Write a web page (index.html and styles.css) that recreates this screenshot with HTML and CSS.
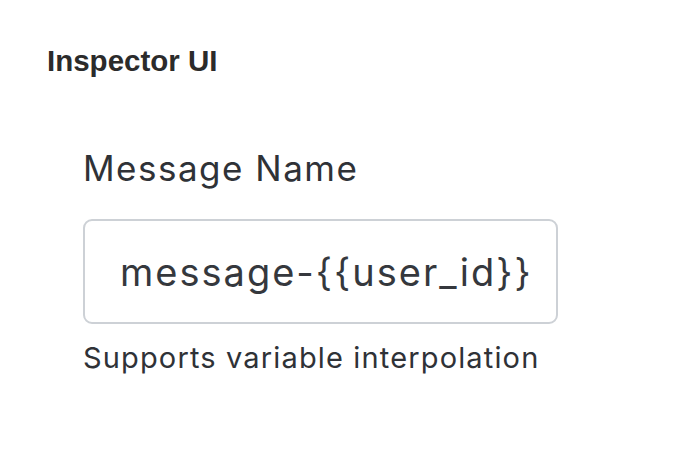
FILE: index.html
```html
<!doctype html>
<html lang="en">
<head>
<meta charset="UTF-8">
<title>Inspector UI</title>
<link rel="stylesheet" href="styles.css">
</head>
<body>
	<h2 class="title">Inspector UI</h2>

	<!-- 메시지 이름 필드 -->
	<div class="field">
		<label class="field_label" for="msgName">Message Name</label>
		<input type="text" id="msgName" class="field_input" value="message-{{user_id}}">
		<div class="field_help">Supports variable interpolation</div>
	</div>
</body>
</html>
```

FILE: styles.css
```css
body{
	margin:0; background-color:#ffffff;
	font-family:Inter, "Liberation Sans", sans-serif;
}
.title{
	margin:0; padding:44px 0 0 47px;
	font-family:"Liberation Sans", Arial, sans-serif;
	font-size:29.5px; font-weight:bold; line-height:34px;
	color:#2b2b2b;
}
.field{
	display:flex; flex-direction:column; align-items:flex-start;
	padding:69px 0 0 83px;
}
.field_label{
	font-size:35px; line-height:42px; color:#2f3237;
	letter-spacing:1.5px;
	margin-bottom:30px;
}
.field_input{
	box-sizing:border-box;
	width:475px; height:105px;
	padding:0 0 0 35px;
	border:2px solid #cdd1d6; border-radius:9px;
	font-family:Inter, "Liberation Sans", sans-serif;
	font-size:38px; color:#35383d;
	letter-spacing:2px;
	outline:none;
}
.field_help{
	margin-top:16px;
	font-size:29px; line-height:35px; color:#2f3237;
	letter-spacing:1.15px;
}
```
